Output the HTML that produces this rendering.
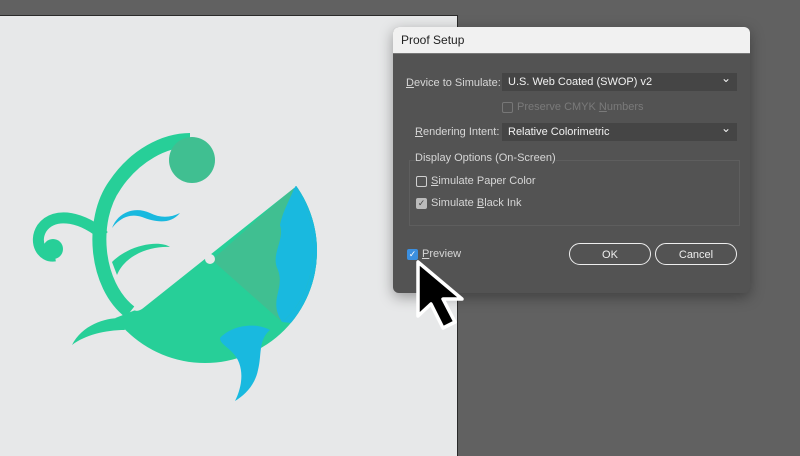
<!DOCTYPE html>
<html><head><style>
body{margin:0;width:800px;height:450px;overflow:hidden;background:#616161;font-family:"Liberation Sans",sans-serif;position:relative}
.art{position:absolute;left:0;top:15px;width:457px;height:440px;background:#e7e8e9;border-top:1px solid #2a2a2a;border-right:1px solid #2a2a2a}
.dlg{position:absolute;left:393px;top:27px;width:357px;height:266px;background:#535353;border-radius:6px;overflow:hidden;box-shadow:0 4px 14px rgba(0,0,0,.35)}
.tb{height:26px;background:#f1f1f1;color:#222;font-size:12px;line-height:26px;padding-left:8px;border-bottom:1px solid #777}
.t{position:absolute;font-size:11px;color:#d6d6d6;white-space:nowrap}
.sel{position:absolute;background:#454545;height:18px;color:#f2f2f2;font-size:11px;line-height:18px;padding-left:6px;box-sizing:border-box}
.sel:after{content:"⌄";position:absolute;right:6px;top:-4px;font-size:12px}
.cb{position:absolute;width:9px;height:9px;border:1px solid #cfcfcf;border-radius:2px}
.btn{position:absolute;height:22px;border:1.5px solid #eee;border-radius:12px;color:#eee;font-size:11px;text-align:center;line-height:22px;box-sizing:border-box}
</style></head><body>
<div class="art"></div>
<svg style="position:absolute;left:0;top:0" width="460" height="450">
 <defs>
  <clipPath id="c"><polygon points="295,186 400,186 400,420 60,420 60,340 143,307"/></clipPath>
  <clipPath id="o"><circle cx="205" cy="251" r="112"/></clipPath>
 </defs>
 <g clip-path="url(#c)"><g clip-path="url(#o)">
  <rect x="80" y="130" width="260" height="250" fill="#27cf98"/>
  <polygon points="212,260 295,186 330,186 330,320 282,322" fill="#40bf91"/>
  <path d="M295,186 C320,220 322,290 282,322 C268,300 285,290 278,270 C270,255 285,240 280,225 C283,210 290,200 295,186Z" fill="#19b9df"/>
  <path d="M360,186 L295,186 C320,220 322,290 282,322 L360,330Z" fill="#19b9df"/>
 </g></g>
 <path d="M295,186 L143,307 Q136,313 130,306" fill="none" stroke="#e7e8e9" stroke-width="2"/>
 <circle cx="210" cy="259" r="5" fill="#e7e8e9"/>
 <path d="M220,338 C232,325 255,322 270,330 C258,340 262,355 258,370 C255,385 245,395 235,401 C243,385 245,365 232,352 C226,346 220,343 220,338Z" fill="#19b9df"/>
 <path d="M130,312 C95,285 90,220 115,185 C135,155 165,140 190,140" fill="none" stroke="#27cf98" stroke-width="14"/>
 <circle cx="192" cy="160" r="23" fill="#40bf91"/>
 <path d="M104,236 C85,218 55,210 42,228 C33,242 42,258 55,256" fill="none" stroke="#27cf98" stroke-width="11"/>
 <circle cx="53" cy="249" r="10" fill="#27cf98"/>
 <path d="M112,262 C130,244 160,240 170,247 C150,246 125,255 117,275Z" fill="#27cf98"/>
 <path d="M72,345 C82,325 105,318 120,318 L125,330 C105,330 85,335 72,345Z" fill="#27cf98"/>
 <path d="M112,228 C118,212 135,206 150,213 C160,218 170,218 180,213 C170,225 155,222 142,217 C130,213 120,218 112,228Z" fill="#19b9df"/>
</svg>
<div class="dlg">
 <div class="tb">Proof Setup</div>
 <div class="t" style="left:13px;top:50px"><u>D</u>evice to Simulate:</div>
 <div class="sel" style="left:109px;top:46px;width:235px">U.S. Web Coated (SWOP) v2</div>
 <div class="cb" style="left:109px;top:75px;border-color:#777"></div>
 <div class="t" style="left:124px;top:74px;color:#7a7a7a">Preserve CMYK <u>N</u>umbers</div>
 <div class="t" style="left:22px;top:99px"><u>R</u>endering Intent:</div>
 <div class="sel" style="left:109px;top:96px;width:235px">Relative Colorimetric</div>
 <div style="position:absolute;left:16px;top:133px;width:329px;height:64px;border:1px solid #5e5e5e"></div>
 <div class="t" style="left:22px;top:125px;background:#535353">Display Options (On-Screen)</div>
 <div class="cb" style="left:23px;top:149px"></div>
 <div class="t" style="left:38px;top:148px"><u>S</u>imulate Paper Color</div>
 <div class="cb" style="left:23px;top:171px;background:#bbb;border-color:#bbb;color:#444;font-size:9px;line-height:9px;text-align:center">✓</div>
 <div class="t" style="left:38px;top:170px">Simulate <u>B</u>lack Ink</div>
 <div class="cb" style="left:14px;top:222px;background:#3b8fe0;border-color:#3b8fe0;color:#fff;font-size:9px;line-height:9px;text-align:center">✓</div>
 <div class="t" style="left:29px;top:221px"><u>P</u>review</div>
 <div class="btn" style="left:176px;top:216px;width:82px">OK</div>
 <div class="btn" style="left:262px;top:216px;width:82px">Cancel</div>
</div>
<svg style="position:absolute;left:410px;top:256px" width="70" height="80"><path d="M8,6 L8,60 L21,48 L33,72 L45,66 L33,43 L52,43Z" fill="#000" stroke="#fff" stroke-width="3.5" stroke-linejoin="round"/></svg>
</body></html>
